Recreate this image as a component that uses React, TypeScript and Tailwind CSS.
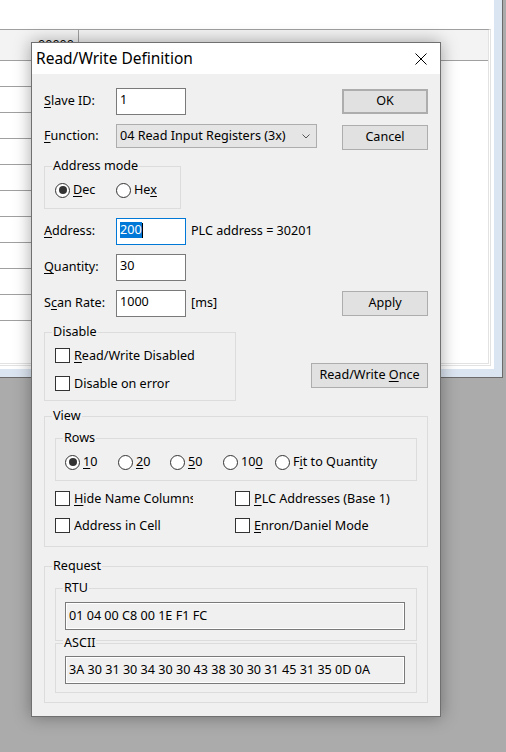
import type { ReactNode } from "react";

// Accelerator-key underline, as Windows draws it.
function U({ children }: { children: ReactNode }) {
  return <span className="underline decoration-1 underline-offset-[2px]">{children}</span>;
}

function Radio({ checked, width, children }: { checked?: boolean; width?: string; children: ReactNode }) {
  return (
    <div className={`flex h-[16px] items-center ${width ?? ""}`}>
      <span className="flex h-[15px] w-[15px] shrink-0 items-center justify-center rounded-full border border-[#333] bg-white">
        {checked && <span className="h-[8px] w-[8px] rounded-full bg-[#333]" />}
      </span>
      <span className="ml-[3px] whitespace-nowrap leading-[16px]">{children}</span>
    </div>
  );
}

function Check({ children, labelWidth }: { children: ReactNode; labelWidth?: string }) {
  return (
    <div className="flex h-[15px] items-center">
      <span className="h-[15px] w-[15px] shrink-0 border border-[#333] bg-white" />
      <span className={`ml-[4px] overflow-hidden whitespace-nowrap leading-[16px] ${labelWidth ?? ""}`}>
        {children}
      </span>
    </div>
  );
}

function Group({
  title,
  className,
  children,
}: {
  title: ReactNode;
  className?: string;
  children: ReactNode;
}) {
  return (
    <fieldset className={`border border-[#dcdcdc] ${className ?? ""}`}>
      <legend className="relative ml-[7px] bg-[#f0f0f0] px-[1px] leading-[16px]">{title}</legend>
      {children}
    </fieldset>
  );
}

function Button({ children, className }: { children: ReactNode; className?: string }) {
  return (
    <button
      type="button"
      className={`flex h-[25px] items-center justify-center border border-[#adadad] bg-[#e1e1e1] ${className ?? ""}`}
    >
      <span className="whitespace-nowrap">{children}</span>
    </button>
  );
}

function Field({ value, className }: { value: ReactNode; className?: string }) {
  return (
    <div className={`h-[27px] w-[70px] border bg-white pl-[3px] pt-[3px] leading-[16px] ${className ?? "border-[#7a7a7a]"}`}>
      {value}
    </div>
  );
}

function Readout({ text }: { text: string }) {
  return (
    <div className="ml-[9px] mt-[6px] flex h-[28px] w-[340px] items-center border border-[#7a7a7a] bg-[#f0f0f0] pl-[3px] shadow-[inset_0_0_0_1px_#ffffff]">
      {text}
    </div>
  );
}

export default function App() {
  return (
    <div className="relative h-[752px] w-[506px] overflow-hidden bg-[#ababab] font-['Noto_Sans',sans-serif] text-[12.6px] text-black">
      {/* --- window behind the dialog --- */}
      <div className="h-[378px] w-[503px] border-r border-b border-[#6b6b6b] bg-[#dbe5f1]">
        <div className="flex h-[369px] w-[494px] flex-col bg-white">
          <div className="h-[29px] shrink-0" />
          <div className="flex h-[337px] w-[491px] flex-col border-t border-r-[3px] border-b-[3px] border-t-[#a0a0a0] border-r-[#e2e2e2] border-b-[#e2e2e2] border-double">
            <div className="flex h-[31px] shrink-0 border-b border-[#a0a0a0] bg-[#f3f3f3]">
              <div className="flex w-[79px] items-start justify-end border-r border-[#a0a0a0] pr-[4px] pt-[7px] leading-[16px]">
                00000
              </div>
            </div>
            {Array.from({ length: 10 }).map((_, i) => (
              <div key={i} className="h-[26px] w-[300px] shrink-0 border-b border-[#a0a0a0]" />
            ))}
          </div>
        </div>
      </div>

      {/* --- dialog --- */}
      <div className="absolute left-[31px] top-[42px] flex h-[675px] w-[410px] flex-col border border-[#707070] bg-[#f0f0f0] shadow-[0_0_16px_rgba(0,0,0,0.35)]">
        <div className="flex h-[31px] shrink-0 items-center justify-between bg-white pl-[4px] pr-[13px]">
          <span className="text-[15.5px]">Read/Write Definition</span>
          <svg width="12" height="12" viewBox="0 0 12 12">
            <path d="M0.5 0.5 L11.5 11.5 M11.5 0.5 L0.5 11.5" stroke="#000" strokeWidth="1" />
          </svg>
        </div>

        <div className="flex flex-col px-[12px] pt-[14px]">
          <div className="flex items-start">
            <div className="flex h-[27px] w-[72px] items-center">
              <span>
                <U>S</U>lave ID:
              </span>
            </div>
            <Field value="1" />
            <Button className="ml-auto mt-[1px] w-[86px] border-2 border-[#0078d7]">OK</Button>
          </div>

          <div className="mt-[9px] flex items-start">
            <div className="flex h-[24px] w-[72px] items-center">
              <span>
                <U>F</U>unction:
              </span>
            </div>
            <div className="flex h-[24px] w-[201px] items-center justify-between border border-[#adadad] bg-[#e5e5e5] pl-[3px] pr-[6px]">
              <span>04 Read Input Registers (3x)</span>
              <svg width="8" height="5" viewBox="0 0 8 5">
                <path d="M0.5 0.5 L4 4 L7.5 0.5" fill="none" stroke="#555" strokeWidth="1" />
              </svg>
            </div>
            <Button className="ml-auto mt-[1px] w-[86px]">Cancel</Button>
          </div>

          <Group title="Address mode" className="mt-[8px] h-[51px] w-[137px]">
            <div className="ml-[10px] mt-[8px] flex">
              <Radio checked width="w-[61px]">
                <U>D</U>ec
              </Radio>
              <Radio>
                He<U>x</U>
              </Radio>
            </div>
          </Group>

          <div className="mt-[9px] flex items-center">
            <div className="w-[72px]">
              <U>A</U>ddress:
            </div>
            <Field
              className="border-[#0078d7]"
              value={
                <span className="flex items-center">
                  <span className="bg-[#0078d7] text-white">200</span>
                  <span className="h-[15px] w-px bg-black" />
                </span>
              }
            />
            <span className="ml-[5px]">PLC address = 30201</span>
          </div>

          <div className="mt-[9px] flex items-center">
            <div className="w-[72px]">
              <U>Q</U>uantity:
            </div>
            <Field value="30" />
          </div>

          <div className="mt-[9px] flex items-start">
            <div className="flex h-[27px] w-[72px] items-center">
              <span>
                S<U>c</U>an Rate:
              </span>
            </div>
            <Field value="1000" />
            <span className="ml-[5px] flex h-[27px] items-center">[ms]</span>
            <Button className="ml-auto mt-[1px] w-[86px]">Apply</Button>
          </div>

          <div className="mt-[7px] flex items-start">
            <Group title="Disable" className="h-[77px] w-[192px]">
              <div className="ml-[10px] mt-[8px]">
                <Check>
                  <U>R</U>ead/Write Disabled
                </Check>
                <div className="mt-[13px]">
                  <Check>Disable on error</Check>
                </div>
              </div>
            </Group>
            <Button className="ml-auto mt-[39px] w-[117px]">
              Read/Write <U>O</U>nce
            </Button>
          </div>

          <Group title="View" className="mt-[7px] h-[139px]">
            <Group title="Rows" className="mx-[10px] mt-[6px] h-[51px]">
              <div className="ml-[9px] mt-[8px] flex">
                <Radio checked width="w-[53px]">
                  <U>1</U>0
                </Radio>
                <Radio width="w-[52px]">
                  <U>2</U>0
                </Radio>
                <Radio width="w-[53px]">
                  <U>5</U>0
                </Radio>
                <Radio width="w-[52px]">
                  10<U>0</U>
                </Radio>
                <Radio>
                  F<U>i</U>t to Quantity
                </Radio>
              </div>
            </Group>
            <div className="ml-[10px] mt-[10px] grid grid-cols-[180px_1fr] gap-y-[12px]">
              <Check labelWidth="w-[119px]">
                <U>H</U>ide Name Columns
              </Check>
              <Check>
                <U>P</U>LC Addresses (Base 1)
              </Check>
              <Check>Address in Cell</Check>
              <Check>
                <U>E</U>nron/Daniel Mode
              </Check>
            </div>
          </Group>

          <Group title="Request" className="mt-[11px] h-[145px]">
            <Group title="RTU" className="mx-[10px] mt-[6px] h-[61px]">
              <Readout text="01 04 00 C8 00 1E F1 FC" />
            </Group>
            <Group title="ASCII" className="relative mx-[10px] -mt-[6px] h-[58px]">
              <div className="-mt-[1px]">
                <Readout text="3A 30 31 30 34 30 30 43 38 30 30 31 45 31 35 0D 0A" />
              </div>
            </Group>
          </Group>
        </div>
      </div>
    </div>
  );
}
